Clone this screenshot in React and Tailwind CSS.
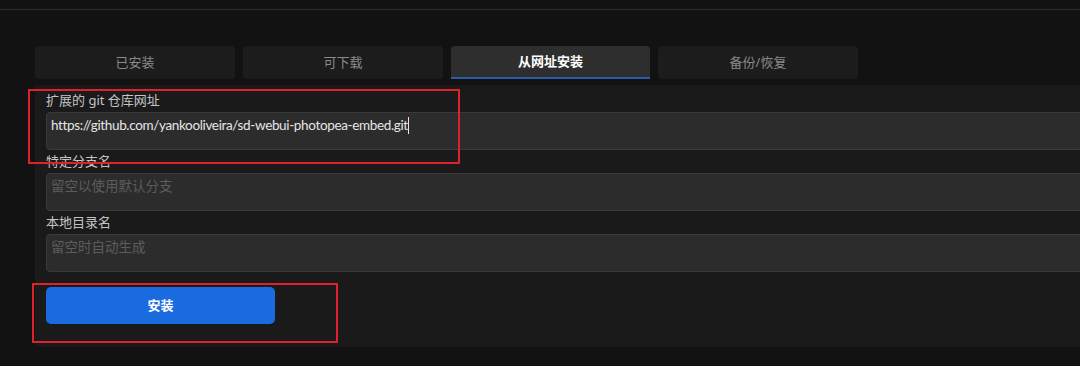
import React from "react";

const tabs = [
  { label: "已安装", active: false },
  { label: "可下载", active: false },
  { label: "从网址安装", active: true },
  { label: "备份/恢复", active: false },
];

const Field = ({ label, value, placeholder, caret }) => (
  <div className="flex flex-col">
    <div className="h-[23px] flex items-center text-[13px] text-[#c4c4c4] leading-none">{label}</div>
    <div className="h-[38px] mr-[-4px] rounded-[4px] border border-[#3a3a3a] bg-[#2c2c2c] px-[4px] pt-[4px] text-[13.5px] leading-[17px]">
      {value ? (
        <span
          className="text-[#e6e6e6] tracking-[-0.35px]"
          style={{ fontFamily: 'Lato, "Noto Sans", sans-serif' }}
        >
          {value}
          {caret && <span className="inline-block w-px h-[17px] align-[-4px] bg-[#e6e6e6]" />}
        </span>
      ) : (
        <span className="text-[#5c5c5c]">{placeholder}</span>
      )}
    </div>
  </div>
);

export default function App() {
  return (
    <div
      className="relative w-[1080px] h-[366px] overflow-hidden bg-[#121212]"
      style={{ fontFamily: '"Noto Sans", "Noto Sans CJK SC", sans-serif' }}
    >
      {/* top divider */}
      <div className="h-[9px]" />
      <div className="h-px bg-[#2e2e2e]" />

      {/* tabs */}
      <div className="flex gap-[8px] pl-[35px] pt-[36px]">
        {tabs.map((t) => (
          <div
            key={t.label}
            className={
              t.active
                ? "w-[199px] h-[33px] flex items-center justify-center rounded-t-[4px] bg-[#2e2e2e] border-b-2 border-[#2a5aa8] text-[13px] font-bold text-white"
                : "w-[200px] h-[33px] flex items-center justify-center rounded-[4px] bg-[#1c1c1c] text-[13px] text-[#8a8a8a]"
            }
          >
            {t.label}
          </div>
        ))}
      </div>

      {/* panel */}
      <div className="ml-[35px] mt-[6px] h-[262px] rounded-bl-[6px] bg-[#1a1a1a] pl-[11px] pt-[4px]">
        <Field
          label="扩展的 git 仓库网址"
          value="https://github.com/yankooliveira/sd-webui-photopea-embed.git"
          caret
        />
        <Field label="特定分支名" placeholder="留空以使用默认分支" />
        <Field label="本地目录名" placeholder="留空时自动生成" />
        <div className="pt-[15px]">
          <button className="w-[229px] h-[37px] rounded-[5px] bg-[#1a6ae0] text-[13px] font-bold text-white">
            安装
          </button>
        </div>
      </div>

      {/* annotation boxes */}
      <div className="absolute left-[28px] top-[89px] w-[432px] h-[75px] border-2 border-[#e0202a]" />
      <div className="absolute left-[32px] top-[283px] w-[306px] h-[60px] border-2 border-[#e0202a]" />
    </div>
  );
}
